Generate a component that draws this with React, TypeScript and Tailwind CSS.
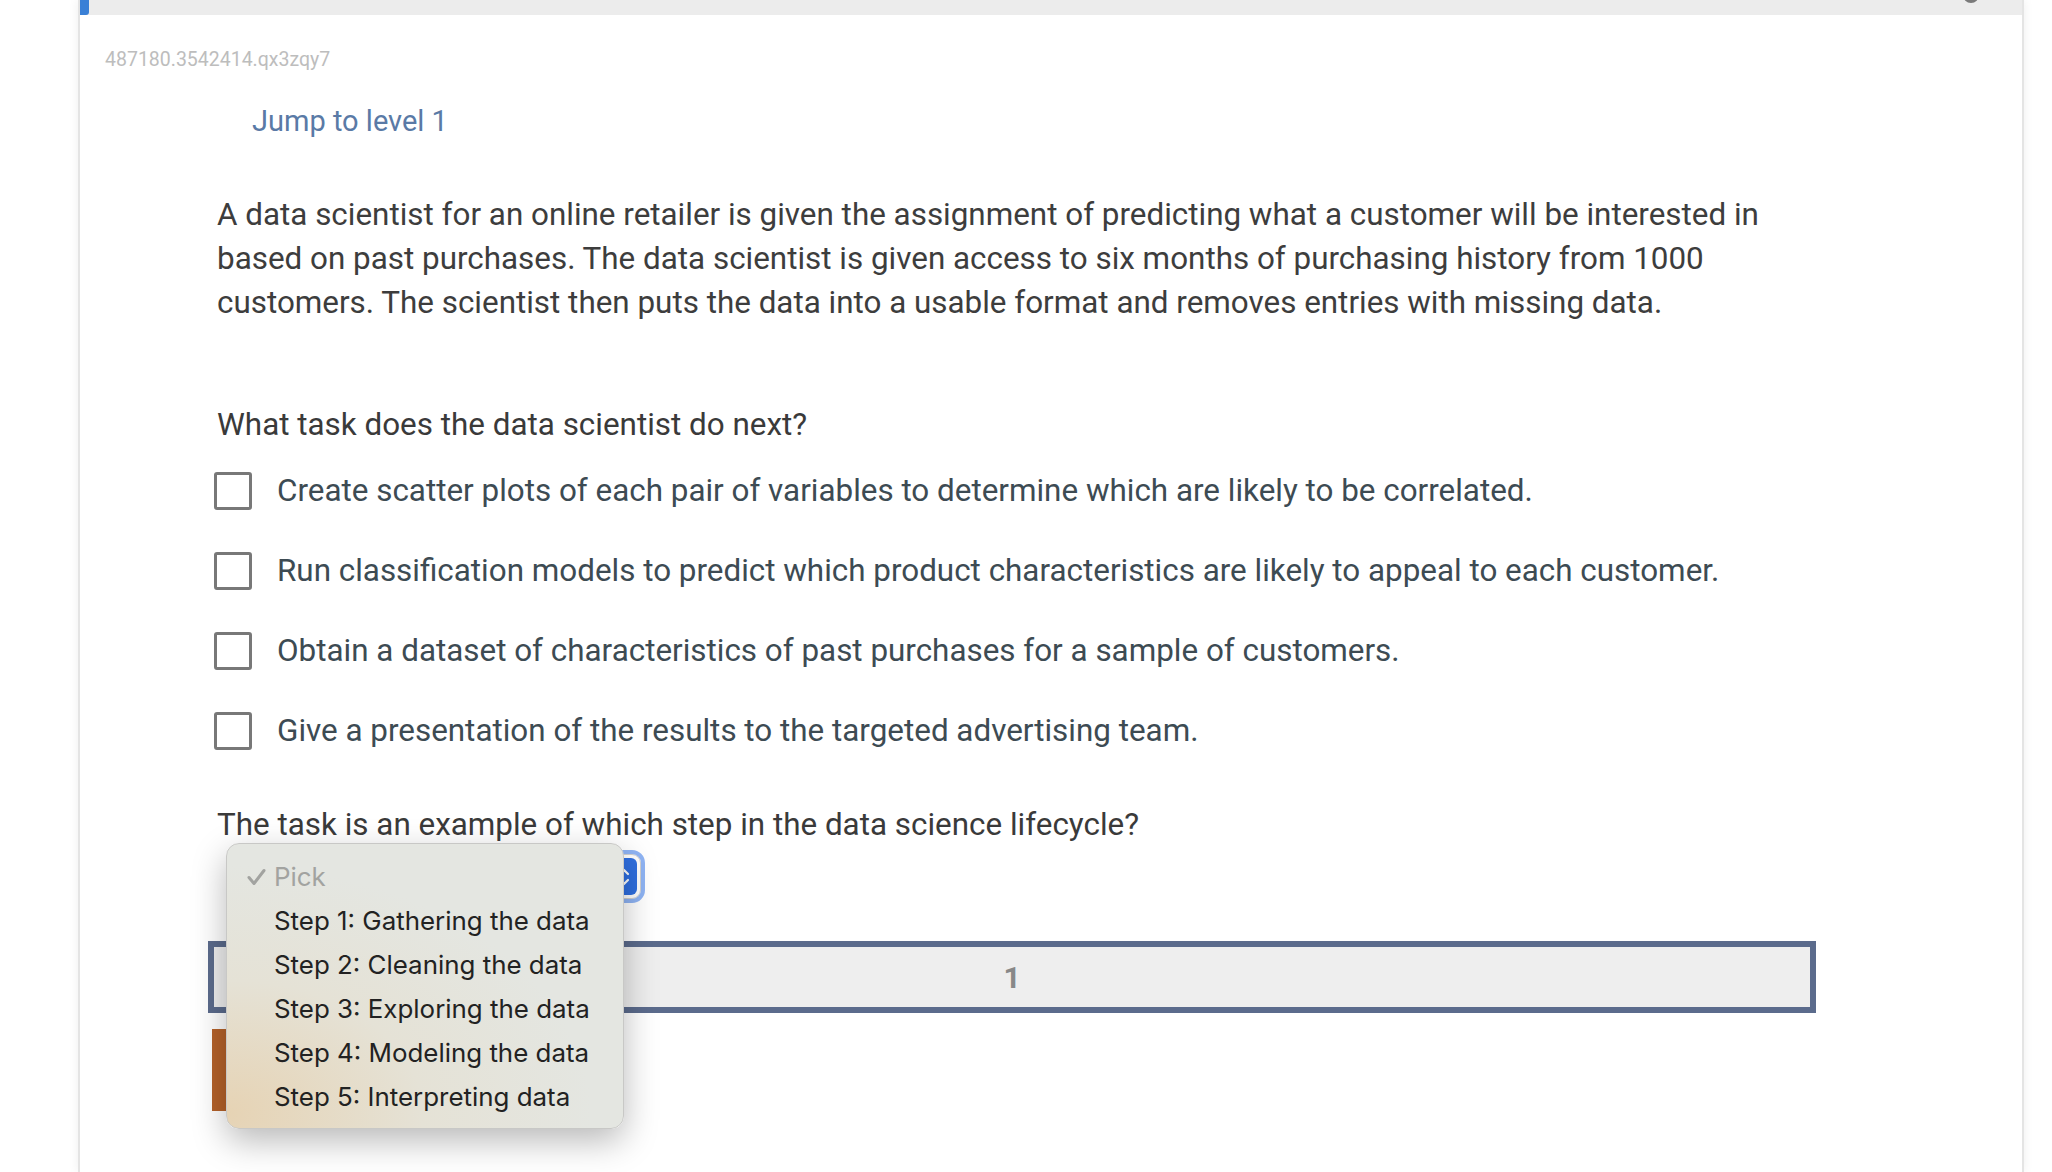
import React from "react";

const options = [
  "Create scatter plots of each pair of variables to determine which are likely to be correlated.",
  "Run classification models to predict which product characteristics are likely to appeal to each customer.",
  "Obtain a dataset of characteristics of past purchases for a sample of customers.",
  "Give a presentation of the results to the targeted advertising team.",
];

const steps = [
  "Step 1: Gathering the data",
  "Step 2: Cleaning the data",
  "Step 3: Exploring the data",
  "Step 4: Modeling the data",
  "Step 5: Interpreting data",
];

function Checkbox() {
  return <span className="block h-[38px] w-[38px] shrink-0 rounded-[3px] border-[3px] border-[#787878] bg-white" />;
}

function PickMenu() {
  return (
    <div className="absolute left-[-6px] top-[-11px] z-20 w-[398px] overflow-hidden rounded-[13px] border border-[#c8c8c6] bg-[radial-gradient(ellipse_at_0%_95%,#e6d3b4_0%,#e5e2d6_35%,#e4e6e1_65%)] pb-[9px] pt-[11px] shadow-[0_12px_34px_rgba(0,0,0,0.28)] font-['Inter',sans-serif] text-[25.9px]">
      <div className="flex h-[44px] items-center text-[#a2a3a0]">
        <span className="flex w-[47px] justify-end pr-[8px]">
          <svg width="19" height="18" viewBox="0 0 19 18" fill="none">
            <path d="M2 9.5 L7 15.5 L17 2.5" stroke="#a2a3a0" strokeWidth="3" strokeLinecap="round" strokeLinejoin="round" />
          </svg>
        </span>
        <span>Pick</span>
      </div>
      {steps.map((s) => (
        <div key={s} className="flex h-[44px] items-center pl-[47px] text-[#222222]">
          {s}
        </div>
      ))}
    </div>
  );
}

export default function App() {
  return (
    <div className="min-h-screen bg-white font-['Roboto',sans-serif]">
      <div className="relative ml-[78px] min-h-[1172px] w-[1946px] border-x-2 border-[#e4e4e4] bg-white shadow-[0_0_10px_rgba(0,0,0,0.07)]">
        {/* top bar */}
        <div className="relative h-[15px] bg-[#ececec]">
          <div className="h-[15px] w-[9px] rounded-br-[3px] bg-[#3a80d6]" />
          <div className="absolute left-[1883px] top-[-14px] h-[17px] w-[16px] rounded-full bg-[#7a7a7a]" />
        </div>

        <div className="pl-[25px] pt-[33px] text-[19.5px] leading-[23px] text-[#bdbdbd]">487180.3542414.qx3zqy7</div>

        <div className="pl-[172px] pt-[33px] text-[29px] leading-[34px] text-[#5a7aa6]">Jump to level 1</div>

        <div className="pl-[137px]">
          <p className="pt-[55px] text-[31.4px] leading-[44px] text-[#3d3d3d]">
            A data scientist for an online retailer is given the assignment of predicting what a customer will be interested in
            <br />
            based on past purchases. The data scientist is given access to six months of purchasing history from 1000
            <br />
            customers. The scientist then puts the data into a usable format and removes entries with missing data.
          </p>

          <p className="pt-[78px] text-[31.4px] leading-[44px] text-[#3a3a3a]">What task does the data scientist do next?</p>

          <div className="flex flex-col gap-[36px] pt-[22px]">
            {options.map((o) => (
              <label key={o} className="ml-[-3px] flex h-[44px] items-center gap-[25px] text-[31.4px] text-[#3d4b53]">
                <Checkbox />
                <span>{o}</span>
              </label>
            ))}
          </div>

          <p className="pt-[50px] text-[31.4px] leading-[44px] text-[#3a3a3a]">
            The task is an example of which step in the data science lifecycle?
          </p>

          {/* select, open */}
          <div className="relative ml-[15px] mt-[7px] h-[45px] w-[409px]">
            <div className="flex h-full w-full items-center justify-end rounded-[9px] border border-[#d0d0d0] bg-white pr-[3px] outline-4 outline-[#8fb4f4]">
              <div className="flex h-[37px] w-[26px] flex-col items-center justify-center rounded-[6px] bg-[#2f6fe0]">
                <svg width="12" height="22" viewBox="0 0 12 22" fill="none">
                  <path d="M2 8 L6 4 L10 8" stroke="white" strokeWidth="2.2" strokeLinecap="round" strokeLinejoin="round" />
                  <path d="M2 14 L6 18 L10 14" stroke="white" strokeWidth="2.2" strokeLinecap="round" strokeLinejoin="round" />
                </svg>
              </div>
            </div>
            <PickMenu />
          </div>

          <div className="ml-[-9px] mt-[42px] flex h-[72px] w-[1608px] items-center justify-center border-[6px] border-[#5b6b8c] bg-[#eeeeee] text-[30px] font-bold text-[#888888]">
            1
          </div>

          <button className="ml-[-5px] mt-[16px] h-[82px] w-[160px] bg-[#b5622a] text-[28px] text-white">Check</button>
        </div>
      </div>
    </div>
  );
}
